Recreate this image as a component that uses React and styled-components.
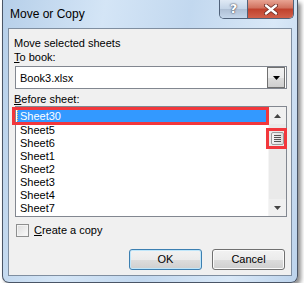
import React from 'react';
import styled, {createGlobalStyle} from 'styled-components';

const GlobalStyle = createGlobalStyle`
  html, body {
    margin: 0;
    padding: 0;
    background: #ffffff;
  }
  body {
    font-family: "Liberation Sans", Arial, sans-serif;
    font-size: 11px;
    color: #000;
  }
`;

const sheets = ['Sheet30', 'Sheet5', 'Sheet6', 'Sheet1', 'Sheet2', 'Sheet3', 'Sheet4', 'Sheet7'];

function TitleButtons () {
    return (
        <ButtonGroup>
            <HelpButton>?</HelpButton>
            <CloseButton>
                <svg width="14" height="11" viewBox="0 0 14 11">
                    <path d="M2 1.5 L12 9.5 M12 1.5 L2 9.5" stroke="#6a2a22" strokeWidth="4" strokeLinecap="round"/>
                    <path d="M2 1.5 L12 9.5 M12 1.5 L2 9.5" stroke="#ffffff" strokeWidth="2.4" strokeLinecap="round"/>
                </svg>
            </CloseButton>
        </ButtonGroup>
    );
}

function Arrow ({down, color = '#000', w = 7}) {
    return (
        <svg width={w} height="4" viewBox="0 0 7 4">
            {down
                ? <path d="M0 0 H7 L3.5 4 Z" fill={color}/>
                : <path d="M0 4 H7 L3.5 0 Z" fill={color}/>}
        </svg>
    );
}

function App () {
    return (
        <>
            <GlobalStyle/>
            <Window>
                <TitleBar>
                    <Title>Move or Copy</Title>
                    <TitleButtons/>
                </TitleBar>
                <Client>
                    <Label>Move selected sheets</Label>
                    <Label><u>T</u>o book:</Label>
                    <Combo>
                        <ComboText>Book3.xlsx</ComboText>
                        <ComboButton><Arrow down/></ComboButton>
                    </Combo>
                    <Label><u>B</u>efore sheet:</Label>
                    <ListWrap>
                        <ListBox>
                            <Rows>
                                {sheets.map((s, i) => (
                                    <Row key={s} selected={i === 0}>{s}</Row>
                                ))}
                            </Rows>
                            <ScrollBar>
                                <ScrollArrow><Arrow color="#444"/></ScrollArrow>
                                <Track size={8}/>
                                <Thumb>
                                    <Grip/><Grip/><Grip/><Grip/>
                                </Thumb>
                                <Track/>
                                <ScrollArrow><Arrow down color="#444"/></ScrollArrow>
                            </ScrollBar>
                        </ListBox>
                        <RowMark/>
                        <ThumbMark/>
                    </ListWrap>
                    <CheckRow>
                        <CheckBox/>
                        <span><u>C</u>reate a copy</span>
                    </CheckRow>
                    <Footer>
                        <DialogButton primary>OK</DialogButton>
                        <DialogButton>Cancel</DialogButton>
                    </Footer>
                </Client>
            </Window>
        </>
    );
}

const Window = styled.div`
  margin-left: 2px;
  width: 296px;
  height: 283px;
  box-sizing: border-box;
  border: 1px solid #4a5566;
  border-top: none;
  border-radius: 0 0 7px 7px;
  background: linear-gradient(100deg, #b6cfe9 0%, #d4e5f6 30%, #c2d8ef 55%, #d9e8f7 80%, #bcd3ec 100%);
  box-shadow: 3px 3px 4px rgba(0, 0, 0, 0.45);
  display: flex;
  flex-direction: column;
`;

const TitleBar = styled.div`
  height: 28px;
  flex-shrink: 0;
  display: flex;
  align-items: flex-start;
  justify-content: space-between;
  padding-left: 7px;
  padding-right: 3px;
`;

const Title = styled.div`
  font-size: 12px;
  line-height: 28px;
`;

const ButtonGroup = styled.div`
  display: flex;
  height: 18px;
  border: 1px solid #50627a;
  border-top: none;
  border-radius: 0 0 5px 5px;
  overflow: hidden;
`;

const HelpButton = styled.div`
  width: 27px;
  border-right: 1px solid #50627a;
  background: linear-gradient(#dfe9f4 0%, #c3d4e7 50%, #aebfd4 51%, #c4d6ea 100%);
  color: #fff;
  font-family: "DejaVu Sans", sans-serif;
  font-weight: bold;
  font-size: 13px;
  line-height: 17px;
  text-align: center;
  text-shadow: 0 0 2px #445, 0 0 1px #334;
`;

const CloseButton = styled.div`
  width: 45px;
  display: flex;
  align-items: center;
  justify-content: center;
  background: linear-gradient(#e8a493 0%, #d0705d 45%, #c0412d 50%, #d1614b 100%);
`;

const Client = styled.div`
  flex: 1;
  margin: 0 5px 6px 5px;
  border: 1px solid #7f8ea0;
  background: #f0f0f0;
  padding: 7px 0 0 5px;
  display: flex;
  flex-direction: column;
`;

const Label = styled.div`
  line-height: 14px;
  height: 14px;
  u { text-decoration-thickness: 1px; text-underline-offset: 1px; }
`;

const Combo = styled.div`
  margin: 2px 0 3px 1px;
  width: 272px;
  height: 23px;
  box-sizing: border-box;
  border: 1px solid #828790;
  background: #fff;
  display: flex;
  align-items: center;
  justify-content: space-between;
  padding: 1px;
`;

const ComboText = styled.span`
  padding-left: 3px;
`;

const ComboButton = styled.div`
  width: 16px;
  height: 19px;
  border: 1px solid #707070;
  background: linear-gradient(#f2f2f2 0%, #ebebeb 50%, #dddddd 51%, #cfcfcf 100%);
  display: flex;
  align-items: center;
  justify-content: center;
`;

const ListWrap = styled.div`
  position: relative;
  margin: 0 0 0 1px;
  width: 272px;
`;

const ListBox = styled.div`
  height: 111px;
  box-sizing: border-box;
  border: 1px solid #828790;
  background: #fff;
  display: flex;
`;

const Rows = styled.div`
  flex: 1;
  padding: 2px 1px 0 1px;
`;

const Row = styled.div`
  height: 13px;
  line-height: 13px;
  padding-left: 3px;
  box-sizing: border-box;
  ${p => p.selected && `
    height: 14px;
    line-height: 14px;
    margin-bottom: 1px;
    background: #3399ff;
    color: #fff;
    outline: 1px dotted #ffcc66;
    outline-offset: -1px;
  `}
`;

const ScrollBar = styled.div`
  width: 17px;
  background: #eaeaea;
  border-left: 1px solid #f5f5f5;
  display: flex;
  flex-direction: column;
`;

const ScrollArrow = styled.div`
  height: 17px;
  flex-shrink: 0;
  display: flex;
  align-items: center;
  justify-content: center;
  background: #f0f0f0;
`;

const Thumb = styled.div`
  margin: 0 2px;
  height: 13px;
  flex-shrink: 0;
  box-sizing: border-box;
  border: 1px solid #9a9a9a;
  border-radius: 2px;
  background: linear-gradient(90deg, #f4f4f4, #dcdcdc);
  display: flex;
  flex-direction: column;
  align-items: flex-start;
  justify-content: center;
  gap: 1px;
  padding-left: 2px;
`;

const Grip = styled.div`
  width: 7px;
  height: 1px;
  background: #555;
`;

const Track = styled.div`
  flex: ${p => p.size ? `0 0 ${p.size}px` : 1};
`;

const RowMark = styled.div`
  position: absolute;
  left: -3px;
  top: 1px;
  width: 257px;
  height: 18px;
  box-sizing: border-box;
  border: 3px solid #f2373c;
`;

const ThumbMark = styled.div`
  position: absolute;
  left: 251px;
  top: 22px;
  width: 21px;
  height: 21px;
  box-sizing: border-box;
  border: 3px solid #f2373c;
`;

const CheckRow = styled.div`
  margin-top: 6px;
  display: flex;
  align-items: center;
  gap: 5px;
  padding-left: 2px;
  height: 14px;
`;

const CheckBox = styled.div`
  width: 13px;
  height: 13px;
  box-sizing: border-box;
  border: 1px solid #8e8f8f;
  background: linear-gradient(135deg, #dcdcdc, #fbfbfb);
  box-shadow: inset 0 0 0 1px #f4f4f4;
`;

const Footer = styled.div`
  margin-top: 12px;
  display: flex;
  justify-content: flex-end;
  gap: 10px;
  padding-right: 6px;
`;

const DialogButton = styled.div`
  width: 73px;
  height: 21px;
  box-sizing: border-box;
  border: 1px solid ${p => p.primary ? '#3c7fb1' : '#707070'};
  border-radius: 3px;
  background: linear-gradient(#f2f2f2 0%, #ebebeb 50%, #dddddd 51%, #cfcfcf 100%);
  box-shadow: inset 0 0 0 1px ${p => p.primary ? '#bfe6fa' : '#fbfbfb'};
  text-align: center;
  line-height: 19px;
`;

export default App;
